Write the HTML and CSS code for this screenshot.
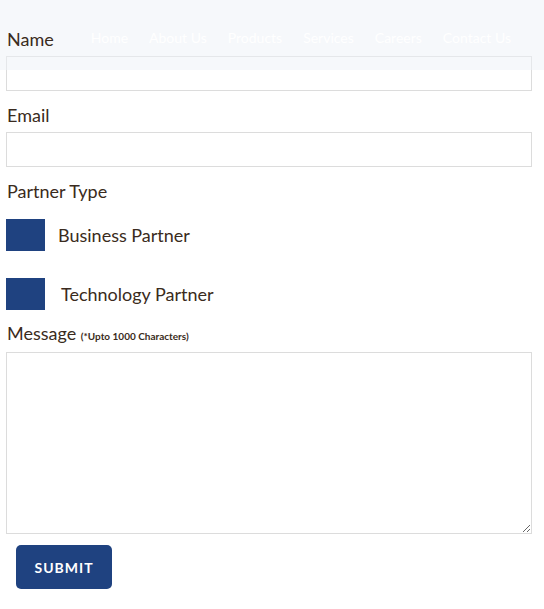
FILE: index.html
```html
<!DOCTYPE html>
<html lang="en">
<head>
<meta charset="utf-8">
<title>Partner Form</title>
<link rel="stylesheet" href="styles.css">
</head>
<body>
<header class="topbar">
  <nav class="nav">
    <a href="#">Home</a>
    <a href="#">About Us</a>
    <a href="#">Products</a>
    <a href="#">Services</a>
    <a href="#">Careers</a>
    <a href="#">Contact Us</a>
  </nav>
</header>
<form class="form">
  <label class="label label-top" for="name">Name</label>
  <input class="field" id="name" type="text">
  <label class="label label-gap" for="email">Email</label>
  <input class="field" id="email" type="email">
  <div class="label label-gap">Partner Type</div>
  <div class="options">
    <div class="option"><span class="box"></span><span class="opt-text">Business Partner</span></div>
    <div class="option"><span class="box"></span><span class="opt-text opt-text-wide">Technology Partner</span></div>
  </div>
  <label class="label label-msg" for="msg">Message <small class="hint">(*Upto 1000 Characters)</small></label>
  <textarea class="area" id="msg"></textarea>
  <button class="submit" type="button">SUBMIT</button>
</form>
</body>
</html>
```
FILE: styles.css
```css
html, body {
  margin: 0;
  padding: 0;
  background: #ffffff;
}
body {
  font-family: "Lato", "Noto Sans", sans-serif;
  color: #3a2b20;
}
.topbar {
  position: absolute;
  top: 0;
  left: 0;
  right: 0;
  height: 70px;
  background: rgba(238, 242, 247, 0.5);
  z-index: 2;
}
.nav {
  display: flex;
  justify-content: flex-end;
  gap: 21px;
  padding: 28px 33px 0 0;
  font-size: 14px;
  line-height: 20px;
}
.nav a {
  color: #ffffff;
  text-decoration: none;
}
.form {
  display: flex;
  flex-direction: column;
  align-items: flex-start;
  padding: 27px 13px 20px 6px;
}
.label {
  display: block;
  font-size: 18px;
  line-height: 24px;
  height: 24px;
  margin: 0 0 5px 1px;
}
.label-top {
  position: relative;
  z-index: 3;
}
.label-gap {
  margin-top: 12px;
}
.field {
  display: block;
  box-sizing: border-box;
  width: 526px;
  height: 35px;
  border: 1px solid #dcdcdc;
  background: #ffffff;
  margin: 0;
  padding: 0 8px;
}
.options {
  display: flex;
  flex-direction: column;
  gap: 27px;
  margin-top: 11px;
}
.option {
  display: flex;
  align-items: center;
  height: 32px;
}
.box {
  width: 39px;
  height: 32px;
  background: #1f4280;
}
.opt-text {
  margin-left: 13px;
  font-size: 18px;
}
.opt-text-wide {
  margin-left: 16px;
}
.label-msg {
  margin-top: 11px;
  margin-bottom: 7px;
}
.hint {
  font-size: 10px;
  font-weight: 700;
}
.area {
  display: block;
  box-sizing: border-box;
  width: 526px;
  height: 182px;
  border: 1px solid #dcdcdc;
  margin: 0;
}
.submit {
  margin: 11px 0 0 10px;
  width: 96px;
  height: 44px;
  border: 0;
  border-radius: 5px;
  background: #1f4280;
  color: #ffffff;
  font-family: "Lato", "Noto Sans", sans-serif;
  font-weight: 700;
  font-size: 14px;
  letter-spacing: 1px;
  padding: 0;
}
```
